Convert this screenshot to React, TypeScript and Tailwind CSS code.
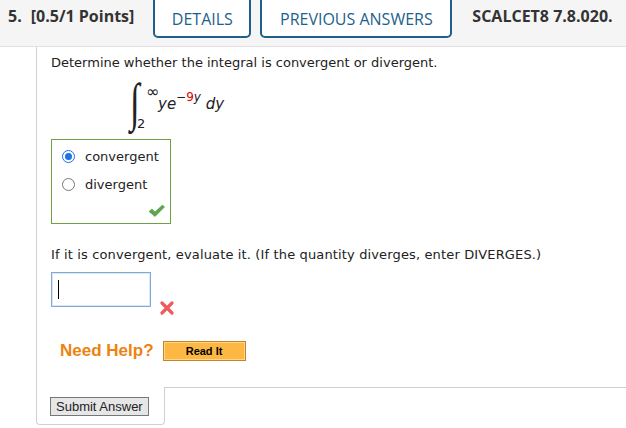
export default function App() {
  return (
    <div className="w-[626px] h-[428px] overflow-hidden bg-white">
      {/* header */}
      <div className="h-[47px] bg-[#f5f5f5] border-b border-[#e2e2e2] flex items-start font-['Open_Sans',sans-serif] text-[16px]">
        <div className="pl-[8px] pt-[4px] font-bold text-[#333] flex gap-[9px]">
          <span>5.</span>
          <span>[0.5/1 Points]</span>
        </div>
        <button className="ml-[19px] mt-[-6px] h-[44px] w-[98px] pt-[5px] border-2 border-[#1d5f8d] rounded-b-[5px] rounded-t-none text-[#1d5f8d] bg-white">
          DETAILS
        </button>
        <button className="ml-[9px] mt-[-6px] h-[44px] w-[192px] pt-[5px] border-2 border-[#1d5f8d] rounded-b-[5px] text-[#1d5f8d] bg-white">
          PREVIOUS ANSWERS
        </button>
        <div className="ml-[20px] pt-[4px] font-bold text-[#333]">SCALCET8 7.8.020.</div>
      </div>

      {/* question body */}
      <div className="ml-[36px] font-['DejaVu_Sans',Verdana,sans-serif] text-[13px] text-[#222]">
        <div className="border-l border-[#d0d0d0] pl-[14px] pt-[6px]">
          <p>Determine whether the integral is convergent or divergent.</p>

          <div className="ml-[76px] mt-[6px] h-[53px] relative">
            <span className="absolute left-[3px] top-[-4px] text-[50px] leading-none font-['Liberation_Serif',serif] italic scale-x-[0.7] scale-y-[1.06] origin-top-left">∫</span>
            <span className="absolute left-[19px] top-[5px] text-[16px] leading-none">∞</span>
            <span className="absolute left-[10px] top-[38px] text-[13px] leading-none">2</span>
            <span className="absolute left-[31px] top-[18px] text-[15px] italic leading-none whitespace-nowrap">
              ye
              <span className="relative top-[-8px] text-[12px] not-italic">
                −<span className="text-[#e00000]">9</span><span className="italic">y</span>
              </span>
              {" "}dy
            </span>
          </div>

          <div className="mt-[7px] w-[120px] h-[85px] border border-[#6ea243] relative pt-[8px] pl-[10px]">
            <label className="flex items-center gap-[10px] h-[18px]">
              <span className="w-[13px] h-[13px] rounded-full border border-[#1a73e8] flex items-center justify-center">
                <span className="w-[7px] h-[7px] rounded-full bg-[#1a73e8]" />
              </span>
              <span>convergent</span>
            </label>
            <label className="flex items-center gap-[10px] h-[18px] mt-[10px]">
              <span className="w-[13px] h-[13px] rounded-full border border-[#767676] bg-white" />
              <span>divergent</span>
            </label>
            <svg className="absolute right-[5px] bottom-[6px]" width="17" height="13" viewBox="0 0 17 13">
              <path d="M1 7.5 L4 5 L7 8 L14.5 1 L16.5 3 L7 12.5 Z" fill="#5aa84a" stroke="#4a9a3c" strokeWidth="0.6" />
            </svg>
          </div>

          <p className="mt-[21px] tracking-[0.14px]">If it is convergent, evaluate it. (If the quantity diverges, enter DIVERGES.)</p>

          <div className="mt-[8px] flex items-start">
            <div className="w-[100px] h-[35px] border border-[#7fa9d6] shadow-[inset_0_0_0_1px_#dbe8f5] flex items-center pl-[6px]">
              <span className="w-[1px] h-[19px] bg-black" />
            </div>
            <svg className="ml-[9px] mt-[29px]" width="14" height="14" viewBox="0 0 14 14">
              <path d="M2 2 L12 12 M12 2 L2 12" stroke="#f05a5a" strokeWidth="3.2" strokeLinecap="round" />
            </svg>
          </div>

          <div className="mt-[26px] flex items-center pl-[9px] h-[20px]">
            <span className="font-['Liberation_Sans',Arial,sans-serif] font-bold text-[17px] text-[#ee8210]">Need Help?</span>
            <button className="ml-[9px] w-[83px] h-[20px] bg-[#fdb844] border border-[#c8822a] shadow-[inset_0_0_0_1px_#ffd68a] font-['Liberation_Sans',Arial,sans-serif] font-bold text-[11px] text-black leading-none">
              Read It
            </button>
          </div>
          <div className="h-[26px]" />
        </div>

        <div className="flex">
          <div className="w-[129px] h-[38px] border-l border-r border-b border-[#d0d0d0] rounded-b-[4px] pl-[13px] pt-[10px]">
            <button className="h-[19px] px-[5px] bg-[#e6e6e6] border border-[#777] font-['Liberation_Sans',Arial,sans-serif] text-[13px] text-[#222] leading-none">
              Submit Answer
            </button>
          </div>
          <div className="flex-1 border-t border-[#d0d0d0]" />
        </div>
      </div>
    </div>
  );
}
